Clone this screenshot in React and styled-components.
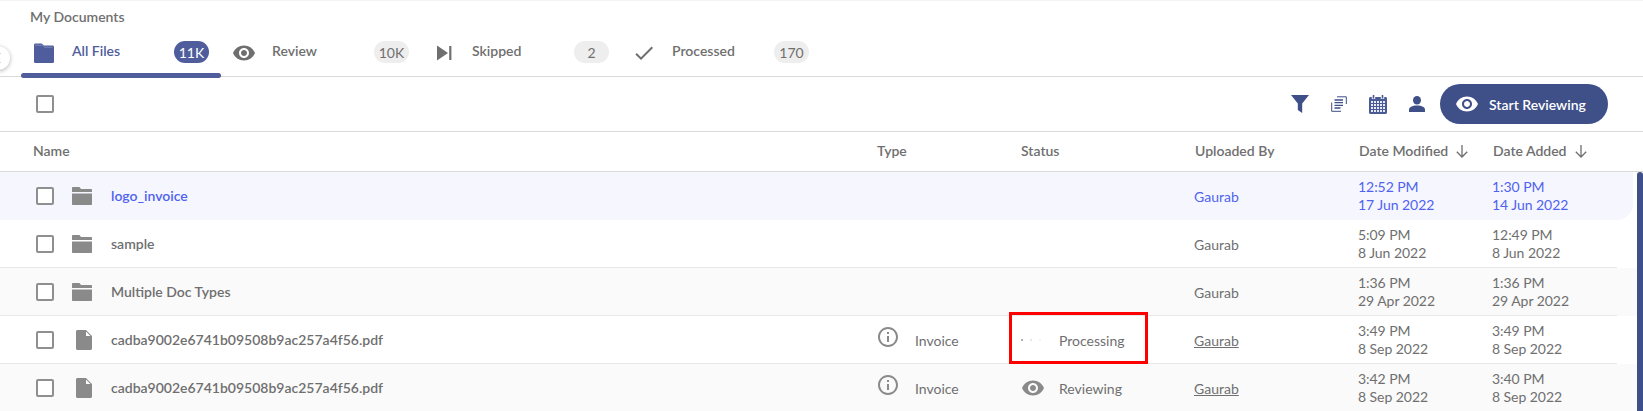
import React from "react";
import styled, { createGlobalStyle } from "styled-components";

const GlobalStyle = createGlobalStyle`
  html, body {
    margin: 0;
    padding: 0;
    background: #fff;
    overflow: hidden;
  }
  * {
    box-sizing: border-box;
  }
`;

const tabs = [
  { label: "All Files", count: "11K", icon: "folder", active: true },
  { label: "Review", count: "10K", icon: "eye" },
  { label: "Skipped", count: "2", icon: "skip" },
  { label: "Processed", count: "170", icon: "check" },
];

const rows = [
  { name: "logo_invoice", kind: "folder", by: "Gaurab", mod: ["12:52 PM", "17 Jun 2022"], add: ["1:30 PM", "14 Jun 2022"], active: true },
  { name: "sample", kind: "folder", by: "Gaurab", mod: ["5:09 PM", "8 Jun 2022"], add: ["12:49 PM", "8 Jun 2022"] },
  { name: "Multiple Doc Types", kind: "folder", by: "Gaurab", mod: ["1:36 PM", "29 Apr 2022"], add: ["1:36 PM", "29 Apr 2022"], striped: true },
  { name: "cadba9002e6741b09508b9ac257a4f56.pdf", kind: "file", type: "Invoice", status: "Processing", by: "Gaurab", link: true, mod: ["3:49 PM", "8 Sep 2022"], add: ["3:49 PM", "8 Sep 2022"] },
  { name: "cadba9002e6741b09508b9ac257a4f56.pdf", kind: "file", type: "Invoice", status: "Reviewing", by: "Gaurab", link: true, mod: ["3:42 PM", "8 Sep 2022"], add: ["3:40 PM", "8 Sep 2022"], striped: true },
];

const EyeIcon = ({ size = 22, color = "#6f6f6f" }) => (
  <svg width={size} height={size} viewBox="0 0 24 24" fill={color}>
    <path d="M12 4.5C7 4.5 2.73 7.61 1 12c1.730 4.390 6 7.500 11 7.500s9.270-3.110 11-7.500c-1.730-4.390-6-7.500-11-7.500zM12 17c-2.760 0-5-2.240-5-5s2.240-5 5-5 5 2.240 5 5-2.240 5-5 5zm0-8c-1.660 0-3 1.340-3 3s1.340 3 3 3 3-1.340 3-3-1.340-3-3-3z" />
  </svg>
);

const TabIcon = ({ name, active }) => {
  if (name === "folder") {
    return (
      <svg width="24" height="24" viewBox="0 0 24 24" fill={active ? "#4f5d9c" : "#6f6f6f"}>
        <path d="M3.500 2.500h6.200l2.300 2h8.400c.9 0 1.600.7 1.600 1.600v14.300c0 .9-.7 1.600-1.600 1.600H3.600c-.9 0-1.600-.7-1.600-1.600V4.100c0-.9.600-1.600 1.500-1.600z" />
        <path d="M3 4.200h7.500l2.200 2h7.800" fill="none" stroke="#8f98c4" strokeWidth=".7" />
      </svg>
    );
  }
  if (name === "eye") return <EyeIcon size={24} />;
  if (name === "skip") {
    return (
      <svg width="24" height="24" viewBox="0 0 24 24" fill="#6f6f6f">
        <path d="M5 4.500l11 7.500-11 7.500z" />
        <rect x="17.200" y="5" width="2.200" height="14" />
      </svg>
    );
  }
  return (
    <svg width="24" height="24" viewBox="0 0 24 24" fill="#6f6f6f">
      <path d="M9 16.200L4.800 12l-1.400 1.400L9 19 21 7l-1.400-1.400z" />
    </svg>
  );
};

const FolderGlyph = () => (
  <svg width="20" height="18" viewBox="0 0 20 18" fill="#8a8a8a">
    <path d="M0 1c0-.6.4-1 1-1h6.500l1.500 2h10c.6 0 1 .4 1 1v2H0z" />
    <path d="M0 6.500h20V17c0 .6-.4 1-1 1H1c-.6 0-1-.4-1-1z" />
  </svg>
);

const FileGlyph = () => (
  <svg width="16" height="20" viewBox="0 0 16 20" fill="#8a8a8a">
    <path d="M1.500 0H10l6 6v12.500c0 .8-.7 1.500-1.500 1.500h-13C.7 20 0 19.300 0 18.500v-17C0 .7.700 0 1.500 0zM10 1.500V6h4.500z" fillRule="evenodd" />
  </svg>
);

const InfoIcon = () => (
  <svg width="24" height="24" viewBox="0 0 24 24" fill="#8a8a8a">
    <path d="M11 7h2v2h-2zm0 4h2v6h-2zm1-9C6.480 2 2 6.480 2 12s4.480 10 10 10 10-4.480 10-10S17.520 2 12 2zm0 18c-4.410 0-8-3.590-8-8s3.590-8 8-8 8 3.590 8 8-3.590 8-8 8z" />
  </svg>
);

const ArrowDown = () => (
  <svg width="14" height="14" viewBox="0 0 14 14" fill="none" stroke="#6f6f6f" strokeWidth="1.300">
    <path d="M7 1v12M1.800 7.800L7 13l5.200-5.200" />
  </svg>
);

const FilterIcon = () => (
  <svg width="18" height="18" viewBox="0 0 18 18" fill="#3f4f88">
    <path d="M0 0h18l-6.800 8.500V18l-4.400-3V8.500z" />
  </svg>
);

const StackIcon = () => (
  <svg width="16" height="16" viewBox="0 0 16 16" fill="none" stroke="#3f4f88">
    <path d="M6 .8h9.300V8" strokeWidth="1" />
    <path d="M.7 6.500v8.800H10" strokeWidth="1" />
    <path d="M3.500 4h8.500M3.500 6.700h8.500M3.500 9.400h8.500M3.500 12h6" strokeWidth="1.300" />
  </svg>
);

const CalendarIcon = () => (
  <svg width="18" height="19" viewBox="0 0 18 19" fill="#4a5a94">
    <path d="M1.500 2h15c.8 0 1.500.7 1.500 1.500v14c0 .8-.7 1.500-1.500 1.500h-15C.7 19 0 18.300 0 17.500v-14C0 2.700.7 2 1.500 2z" />
    <rect x="2.800" y="0" width="3.400" height="4" fill="#fff" />
    <rect x="11.800" y="0" width="3.400" height="4" fill="#fff" />
    <rect x="3.700" y="0" width="1.600" height="3.600" />
    <rect x="12.700" y="0" width="1.600" height="3.600" />
    <g fill="#e6e8f2">
      {[6, 9, 12, 15].map((y) =>
        [2, 5, 8, 11, 14].map((x) => <rect key={`${x}-${y}`} x={x} y={y} width="2" height="2" />)
      )}
    </g>
  </svg>
);

const PersonIcon = () => (
  <svg width="16" height="16" viewBox="0 0 16 16" fill="#3f4f88">
    <ellipse cx="8" cy="4.300" rx="4" ry="4.300" />
    <path d="M0 16v-2.500c0-2.300 3-4 8-4s8 1.700 8 4V16z" />
  </svg>
);

const Page = styled.div`
  position: relative;
  width: 1643px;
  height: 411px;
  overflow: hidden;
  background: #fff;
  color: #6f6f6f;
  font-family: Lato, "Open Sans", sans-serif;
  font-size: 14px;
  border-top: 1px solid #f3f3f3;
`;

const Title = styled.div`
  height: 37px;
  padding: 8px 0 0 30px;
  font-size: 14px;
  font-weight: 600;
  line-height: 16px;
`;

const TabBar = styled.div`
  display: flex;
  height: 39px;
  padding-left: 21px;
  border-bottom: 1px solid #d9d9d9;
`;

const Tab = styled.div`
  position: relative;
  display: flex;
  align-items: flex-start;
  width: 200px;
  height: 39px;
  padding: 3px 12px 0 0;
  color: ${(p) => (p.$active ? "#4f5d9c" : "#6f6f6f")};

  ${(p) =>
    p.$active &&
    `&::after {
      content: "";
      position: absolute;
      left: 0;
      right: 0;
      bottom: -1px;
      height: 5px;
      border-radius: 3px;
      background: #4f5d9c;
    }`}
`;

const TabIconSlot = styled.span`
  display: flex;
  justify-content: center;
  width: 24px;
  height: 24px;
  margin: 0 16px 0 11px;
`;

const TabLabel = styled.span`
  flex: 1;
  font-size: 14px;
  font-weight: 600;
  line-height: 20px;
`;

const Badge = styled.span`
  width: 35px;
  height: 22px;
  border-radius: 11px;
  background: ${(p) => (p.$active ? "#4f5d9c" : "#eeeeee")};
  color: ${(p) => (p.$active ? "#fff" : "#6f6f6f")};
  font-size: 14px;
  line-height: 24px;
  text-align: center;
`;

const Handle = styled.div`
  position: absolute;
  left: -14px;
  top: 45px;
  width: 24px;
  height: 24px;
  border-radius: 50%;
  background: #fff;
  box-shadow: 0 1px 4px rgba(0, 0, 0, 0.3);
  display: flex;
  align-items: center;
  justify-content: flex-end;
  padding-right: 9px;
`;

const Toolbar = styled.div`
  display: flex;
  align-items: center;
  height: 55px;
  padding: 0 35px 0 36px;
  border-bottom: 1px solid #d9d9d9;
`;

const ToolIcons = styled.div`
  display: flex;
  align-items: center;
  margin-left: auto;
  margin-right: 4px;
`;

const ToolIcon = styled.span`
  display: flex;
  align-items: center;
  justify-content: center;
  width: ${(p) => p.$w}px;
`;

const Check = styled.span`
  display: block;
  flex: none;
  width: 18px;
  height: 18px;
  border: 2px solid #8f8f8f;
  border-radius: 2px;
  background: #fff;
`;

const StartButton = styled.button`
  display: flex;
  align-items: center;
  gap: 10px;
  width: 168px;
  height: 40px;
  padding: 0 0 0 15px;
  border: none;
  border-radius: 20px;
  background: #3f4f88;
  color: #fff;
  font-family: inherit;
  font-size: 14px;
  font-weight: 600;
`;

const grid = `
  display: grid;
  grid-template-columns: 841px 144px 173px 165px 134px 124px;
  align-items: center;
`;

const HeadRow = styled.div`
  ${grid}
  height: 40px;
  padding: 0 0 2px 36px;
  border-bottom: 1px solid #d9d9d9;
  font-size: 14px;
  font-weight: 600;
`;

const HeadCell = styled.div`
  display: flex;
  align-items: center;
  gap: 7px;
  margin-left: ${(p) => p.$shift || 0}px;
`;

const Body = styled.div`
  display: flex;
`;

const List = styled.div`
  width: 1637px;
`;

const ScrollThumb = styled.div`
  width: 6px;
  height: 240px;
  background: #3f4f88;
  border-radius: 3px 3px 0 0;
`;

const Row = styled.div`
  ${grid}
  height: 48px;
  padding-left: 36px;
  color: ${(p) => (p.$active ? "#4f62f0" : "#6f6f6f")};
  background: ${(p) =>
    p.$active
      ? "#f6f7fe"
      : `linear-gradient(#e8e8e8, #e8e8e8) left bottom / 1617px 1px no-repeat ${p.$striped ? "#fafafa" : "#fff"}`};
  border-radius: ${(p) => (p.$active ? "0 0 16px 0" : "0")};
  margin-right: ${(p) => (p.$active ? "4px" : "0")};
`;

const NameCell = styled.div`
  display: flex;
  align-items: center;
`;

const KindIcon = styled.span`
  display: flex;
  justify-content: flex-end;
  width: 38px;
  margin-right: 19px;
`;

const NameText = styled.span`
  padding-bottom: 2px;
  font-size: 14px;
  font-weight: 600;
`;

const IconText = styled.div`
  display: flex;
  align-items: center;
  font-size: 14px;
`;

const TypeIconSlot = styled.span`
  display: flex;
  width: 39px;
  margin: -6px 0 0 -1px;
`;

const StatusIconSlot = styled.span`
  display: flex;
  align-items: center;
  width: 38px;
`;

const Dots = styled.span`
  display: flex;
  gap: 7px;
`;

const Dot = styled.i`
  width: 2px;
  height: 2px;
  border-radius: 50%;
  background: ${(p) => p.$c};
`;

const ByCell = styled.div`
  font-size: 14px;
  text-decoration: ${(p) => (p.$link ? "underline" : "none")};
`;

const DateCell = styled.div`
  font-size: 14px;
  line-height: 18px;
  margin-left: -1px;
  letter-spacing: -0.05px;
`;

const Marker = styled.div`
  position: absolute;
  left: 1009px;
  top: 311px;
  width: 139px;
  height: 52px;
  border: 3px solid #ff0000;
`;

const App = () => (
  <Page>
    <GlobalStyle />
    <Title>My Documents</Title>
    <TabBar>
      {tabs.map((t) => (
        <Tab key={t.label} $active={t.active}>
          <TabIconSlot>
            <TabIcon name={t.icon} active={t.active} />
          </TabIconSlot>
          <TabLabel>{t.label}</TabLabel>
          <Badge $active={t.active}>{t.count}</Badge>
        </Tab>
      ))}
    </TabBar>
    <Handle>
      <svg width="6" height="12" viewBox="0 0 6 12" fill="none" stroke="#3f4f88" strokeWidth="1.400">
        <path d="M5 1L0 6l5 5" />
      </svg>
    </Handle>
    <Toolbar>
      <Check />
      <ToolIcons>
        <ToolIcon $w={39}><FilterIcon /></ToolIcon>
        <ToolIcon $w={39}><StackIcon /></ToolIcon>
        <ToolIcon $w={39}><CalendarIcon /></ToolIcon>
        <ToolIcon $w={39}><PersonIcon /></ToolIcon>
      </ToolIcons>
      <StartButton>
        <EyeIcon size={24} color="#fff" />
        Start Reviewing
      </StartButton>
    </Toolbar>
    <HeadRow>
      <HeadCell $shift={-3}>Name</HeadCell>
      <HeadCell>Type</HeadCell>
      <HeadCell>Status</HeadCell>
      <HeadCell $shift={1}>Uploaded By</HeadCell>
      <HeadCell>Date Modified <ArrowDown /></HeadCell>
      <HeadCell>Date Added <ArrowDown /></HeadCell>
    </HeadRow>
    <Body>
      <List>
        {rows.map((r, i) => (
          <Row key={i} $active={r.active} $striped={r.striped}>
            <NameCell>
              <Check />
              <KindIcon>{r.kind === "folder" ? <FolderGlyph /> : <FileGlyph />}</KindIcon>
              <NameText>{r.name}</NameText>
            </NameCell>
            <IconText>
              {r.type && (
                <>
                  <TypeIconSlot><InfoIcon /></TypeIconSlot>
                  {r.type}
                </>
              )}
            </IconText>
            <IconText>
              {r.status && (
                <>
                  <StatusIconSlot>
                    {r.status === "Reviewing" ? (
                      <EyeIcon size={24} color="#8a8a8a" />
                    ) : (
                      <Dots>
                        <Dot $c="#999" />
                        <Dot $c="#ddd" />
                        <Dot $c="#f0f0f0" />
                      </Dots>
                    )}
                  </StatusIconSlot>
                  {r.status}
                </>
              )}
            </IconText>
            <ByCell $link={r.link}>{r.by}</ByCell>
            <DateCell>{r.mod[0]}<br />{r.mod[1]}</DateCell>
            <DateCell>{r.add[0]}<br />{r.add[1]}</DateCell>
          </Row>
        ))}
      </List>
      <ScrollThumb />
    </Body>
    <Marker />
  </Page>
);

export default App;
